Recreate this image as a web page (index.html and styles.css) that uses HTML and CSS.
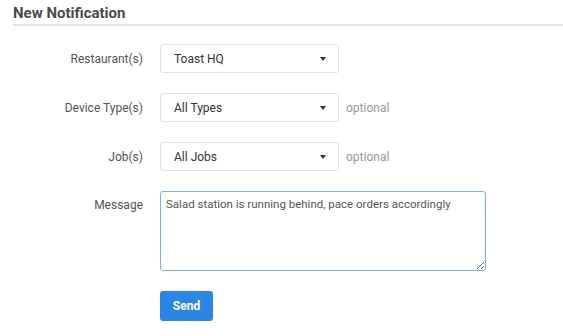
FILE: index.html
```html
<!DOCTYPE html>
<html lang="en">
<head>
    <meta charset="UTF-8">
    <meta name="viewport" content="width=device-width, initial-scale=1.0">
    <title>New Notification</title>
    <link rel="stylesheet" href="styles.css">
</head>
<body>
    <div class="container">
        <h1>New Notification</h1>

        <div class="form">
            <div class="row">
                <label class="label">Restaurant(s)</label>
                <div class="select">
                    <span>Toast HQ</span>
                    <span class="caret"></span>
                </div>
            </div>

            <div class="row">
                <label class="label">Device Type(s)</label>
                <div class="select">
                    <span>All Types</span>
                    <span class="caret"></span>
                </div>
                <span class="hint">optional</span>
            </div>

            <div class="row">
                <label class="label">Job(s)</label>
                <div class="select">
                    <span>All Jobs</span>
                    <span class="caret"></span>
                </div>
                <span class="hint">optional</span>
            </div>

            <div class="row row-top">
                <label class="label label-top" for="message">Message</label>
                <textarea id="message" class="message">Salad station is running behind, pace orders accordingly</textarea>
            </div>

            <div class="row">
                <span class="label"></span>
                <button>Send</button>
            </div>
        </div>
    </div>
</body>
</html>
```

FILE: styles.css
```css
body {
    font-family: Roboto, "Liberation Sans", Arial, sans-serif;
    margin: 0;
    background-color: white;
    color: #333;
}
.container {
    padding: 0 0 0 13px;
}
h1 {
    font-size: 15px;
    font-weight: bold;
    color: #4a4a4a;
    margin: 0;
    padding: 4px 0 2px 0;
    border-bottom: 2px solid #e3e3e6;
}
.form {
    display: flex;
    flex-direction: column;
    gap: 20px;
    padding-top: 18px;
}
.row {
    display: flex;
    align-items: center;
    gap: 17px;
}
.row-top {
    align-items: flex-start;
}
.label {
    width: 130px;
    text-align: right;
    font-size: 12px;
    color: #555;
}
.label-top {
    padding-top: 7px;
}
.select {
    box-sizing: border-box;
    width: 179px;
    height: 29px;
    display: flex;
    align-items: center;
    justify-content: space-between;
    padding: 0 12px 0 13px;
    border: 1px solid #e2e2e2;
    border-radius: 3px;
    font-size: 12px;
    color: #333;
}
.caret {
    width: 0;
    height: 0;
    border-left: 3.5px solid transparent;
    border-right: 3.5px solid transparent;
    border-top: 4px solid #333;
}
.hint {
    margin-left: -10px;
    font-size: 12px;
    color: #999;
}
.message {
    box-sizing: border-box;
    width: 326px;
    height: 80px;
    padding: 5px 5px;
    border: 1px solid #7aaeea;
    border-radius: 3px;
    font-family: Roboto, "Liberation Sans", Arial, sans-serif;
    font-size: 11.5px;
    color: #555;
    outline: none;
    resize: vertical;
}
button {
    width: 53px;
    height: 30px;
    padding: 0;
    background-color: #2b86e3;
    color: white;
    border: none;
    border-radius: 3px;
    font-family: Roboto, "Liberation Sans", Arial, sans-serif;
    font-size: 12px;
    font-weight: bold;
    cursor: pointer;
}
```
